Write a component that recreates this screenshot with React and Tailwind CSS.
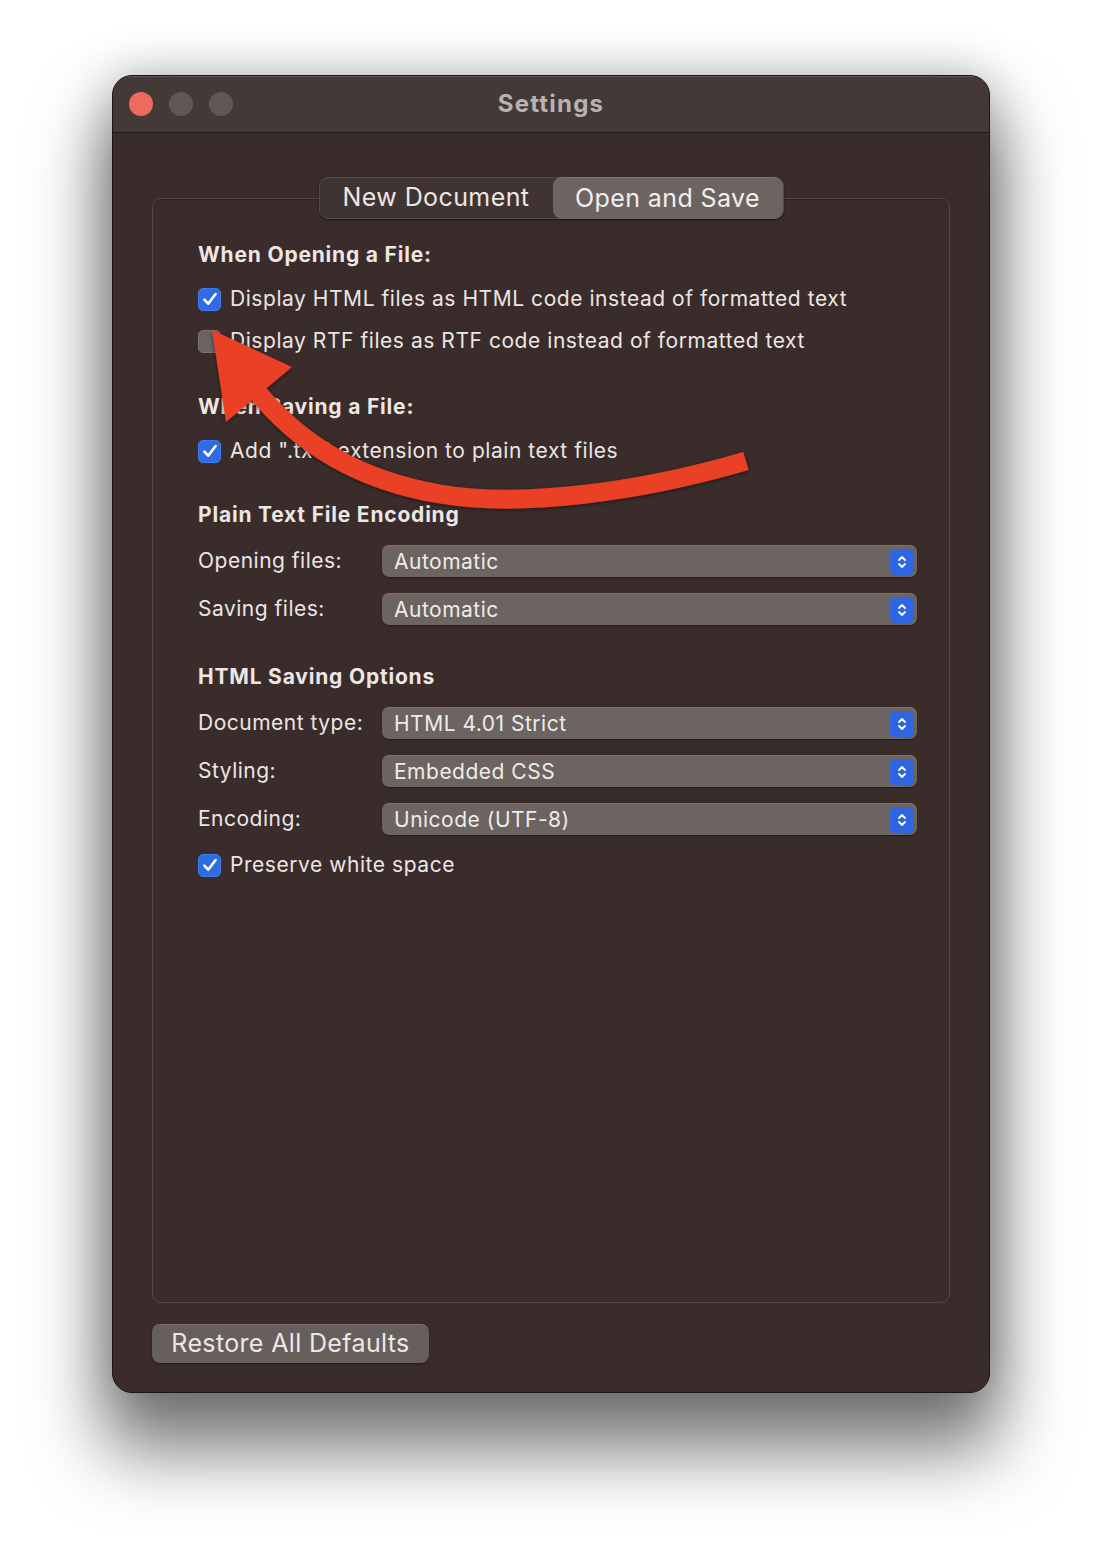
import React from "react";

const font = { fontFamily: "Inter, 'Noto Sans', 'Liberation Sans', sans-serif" };

function Check({ checked }) {
  if (!checked) {
    return <div className="w-[23px] h-[23px] rounded-[5px] bg-[#6a6361] border border-[#7a726f] shrink-0" />;
  }
  return (
    <div className="w-[23px] h-[23px] rounded-[5px] bg-[#2f6be3] border border-[#3f7bf0] shrink-0 flex items-center justify-center">
      <svg width="18" height="18" viewBox="0 0 16 16">
        <path d="M3 8.6 L6.4 12.2 L13 3.6" fill="none" stroke="white" strokeWidth="2.3" strokeLinecap="round" strokeLinejoin="round" />
      </svg>
    </div>
  );
}

function CheckRow({ checked, children, className = "" }) {
  return (
    <div className={`flex items-center h-[28px] gap-[9px] ${className}`}>
      <Check checked={checked} />
      <span className="text-[21px] text-[#ebe6e4] tracking-[0.55px]">{children}</span>
    </div>
  );
}

function Heading({ children, className = "" }) {
  return (
    <div className={`h-[28px] flex items-center text-[21px] font-bold text-[#ece7e5] tracking-[0.8px] ${className}`}>{children}</div>
  );
}

function Popup({ label, value, className = "" }) {
  return (
    <div className={`flex items-center h-[32px] ${className}`}>
      <div className="w-[184px] text-[21px] text-[#ebe6e4] tracking-[0.5px]">{label}</div>
      <div className="w-[535px] h-[32px] rounded-[7px] bg-[#6b6461] border-t border-[#7d7572] shadow-[0_1px_2px_rgba(0,0,0,0.4)] flex items-center justify-between pl-[12px] pr-[3px]">
        <span className="text-[21px] text-[#f0ebe9] tracking-[0.5px]">{value}</span>
        <div className="w-[24px] h-[26px] rounded-[5px] bg-[#2d66e0] flex items-center justify-center">
          <svg width="12" height="18" viewBox="0 0 12 18">
            <path d="M3 7 L6 4 L9 7" fill="none" stroke="white" strokeWidth="1.8" strokeLinecap="round" strokeLinejoin="round" />
            <path d="M3 11 L6 14 L9 11" fill="none" stroke="white" strokeWidth="1.8" strokeLinecap="round" strokeLinejoin="round" />
          </svg>
        </div>
      </div>
    </div>
  );
}

export default function App() {
  return (
    <div className="relative w-[1102px] h-[1542px] bg-white overflow-hidden" style={font}>
      <div className="pt-[75px] pl-[112px]">
        <div className="w-[878px] h-[1318px] rounded-[20px] bg-[#3a2c2a] border border-[#1b1514] shadow-[0_50px_70px_10px_rgba(0,0,0,0.5),0_0_50px_rgba(0,0,0,0.25)] flex flex-col overflow-hidden">
          {/* Title bar */}
          <div className="relative h-[57px] bg-[#433a38] border-b border-[#1f1918] flex items-center shrink-0 shadow-[inset_0_1px_0_rgba(255,255,255,0.15)]">
            <div className="flex gap-[16px] pl-[16px]">
              <div className="w-[24px] h-[24px] rounded-full bg-[#ec6a5e]" />
              <div className="w-[24px] h-[24px] rounded-full bg-[#5f5856]" />
              <div className="w-[24px] h-[24px] rounded-full bg-[#5f5856]" />
            </div>
            <div className="absolute inset-0 flex items-center justify-center text-[24px] font-bold text-[#b9b3b0] tracking-[1.2px] pointer-events-none">
              Settings
            </div>
          </div>

          {/* Body */}
          <div className="flex-1 flex flex-col px-[39px] pt-[44px] pb-[29px]">
            <div className="relative z-10 flex justify-center">
              <div className="flex h-[42px] rounded-[9px] bg-[#3f3432] border border-[#564b49] shadow-[0_1px_2px_rgba(0,0,0,0.5)]">
                <div className="w-[233px] flex items-center justify-center text-[25px] text-[#ebe6e4] tracking-[0.4px]">New Document</div>
                <div className="w-[230px] -my-px rounded-[9px] bg-[#6c6461] border-t border-[#7f7774] flex items-center justify-center text-[25px] text-[#f2eeec] tracking-[0.4px]">
                  Open and Save
                </div>
              </div>
            </div>
            <div className="-mt-[21px] flex-1 rounded-[9px] border border-[#524745] bg-[#3a2c2a] shadow-[inset_0_1px_0_rgba(0,0,0,0.2)] pl-[45px] pr-[31px] pt-[42px] flex flex-col">
              <Heading>When Opening a File:</Heading>
              <CheckRow checked className="mt-[16px]">Display HTML files as HTML code instead of formatted text</CheckRow>
              <CheckRow checked={false} className="mt-[14px]">Display RTF files as RTF code instead of formatted text</CheckRow>
              <Heading className="mt-[38px]">When Saving a File:</Heading>
              <CheckRow checked className="mt-[16px]">Add ".txt" extension to plain text files</CheckRow>
              <Heading className="mt-[36px]">Plain Text File Encoding</Heading>
              <Popup className="mt-[16px]" label="Opening files:" value="Automatic" />
              <Popup className="mt-[16px]" label="Saving files:" value="Automatic" />
              <Heading className="mt-[38px]">HTML Saving Options</Heading>
              <Popup className="mt-[16px]" label="Document type:" value="HTML 4.01 Strict" />
              <Popup className="mt-[16px]" label="Styling:" value="Embedded CSS" />
              <Popup className="mt-[16px]" label="Encoding:" value="Unicode (UTF-8)" />
              <CheckRow checked className="mt-[16px]">Preserve white space</CheckRow>
            </div>
            <div className="mt-[21px] flex">
              <div className="h-[39px] w-[277px] rounded-[8px] bg-[#675f5c] border-t border-[#7b7370] shadow-[0_1px_2px_rgba(0,0,0,0.5)] flex items-center justify-center text-[25px] text-[#ece7e5] tracking-[0.35px]">
                Restore All Defaults
              </div>
            </div>
          </div>
        </div>
      </div>

      {/* Red annotation arrow */}
      <svg className="absolute left-0 top-0 pointer-events-none" width="1102" height="1542" viewBox="0 0 1102 1542">
        <defs>
          <filter id="sh" x="-10%" y="-10%" width="120%" height="120%">
            <feDropShadow dx="0" dy="1" stdDeviation="2" floodColor="#000" floodOpacity="0.5" />
          </filter>
        </defs>
        <g filter="url(#sh)">
          <path d="M746 461 C 640 492, 520 508, 440 494 C 355 480, 295 440, 254 388" fill="none" stroke="#ea3f28" strokeWidth="19" strokeLinecap="butt" />
          <polygon points="212,330 292,367 226,422" fill="#ea3f28" />
        </g>
      </svg>
    </div>
  );
}
